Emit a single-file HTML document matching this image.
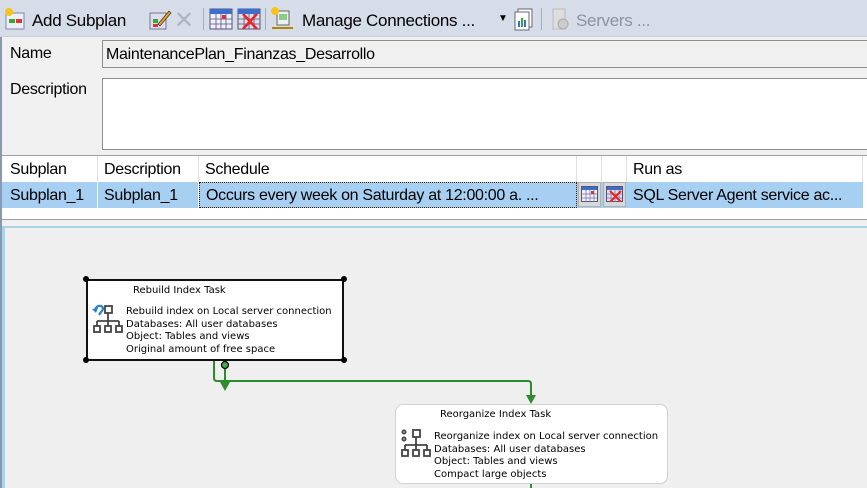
<!DOCTYPE html>
<html><head><style>
*{margin:0;padding:0;box-sizing:border-box}
body{width:867px;height:488px;overflow:hidden;background:#f0f0f0;font-family:"Liberation Sans",sans-serif;position:relative;color:#000}
.a{position:absolute;white-space:nowrap}
.tb{font-size:17px;letter-spacing:-0.3px}
.g{font-size:16px;letter-spacing:-0.3px}
.cell{position:absolute;border-right:1px solid #e0e0e0;height:26px;padding:5px 0 0 6px;font-size:16px;letter-spacing:-0.3px;white-space:nowrap;overflow:hidden}
.box{position:absolute;background:#fff;font-family:"DejaVu Sans",sans-serif;font-size:10px;line-height:12.5px;color:#111}
</style></head><body>
<div class="a" style="left:0;top:0;width:867px;height:37px;background:#d7dce9;border-bottom:1px solid #c8cfdf"></div>
<div class="a" style="left:0;top:37px;width:2px;height:451px;background:#8a97b5"></div>
<svg class="a" style="left:3px;top:7px" width="24" height="24"><rect x="3" y="6" width="18" height="16" fill="#eef" stroke="#7a8aa8"/><rect x="6" y="12" width="6" height="4" fill="#3a3"/><rect x="13" y="12" width="6" height="4" fill="#d33"/><circle cx="6" cy="5" r="4" fill="#f5c518"/></svg>
<div class="a tb" style="left:32px;top:11px">Add Subplan</div>
<svg class="a" style="left:148px;top:8px" width="24" height="24"><rect x="2" y="5" width="16" height="16" fill="#dde" stroke="#778"/><rect x="5" y="11" width="5" height="4" fill="#3a3"/><rect x="5" y="16" width="5" height="3" fill="#d33"/><path d="M10 16 L21 3 L23 5 L12 18Z" fill="#e8a020" stroke="#333" stroke-width=".7"/></svg>
<div class="a" style="left:174px;top:6px;font-size:24px;color:#b0b4bd">✕</div>
<div class="a" style="left:203px;top:8px;width:1px;height:22px;background:#aab"></div>
<svg class="a" style="left:209px;top:8px" width="24" height="22"><rect x="1" y="1" width="22" height="20" fill="#eef" stroke="#557"/><rect x="1" y="1" width="22" height="5" fill="#3a6fd0"/><path d="M1 11H23M1 16H23M7 6V21M12 6V21M17 6V21" stroke="#557" stroke-width=".8"/><rect x="13" y="7" width="4" height="4" fill="#d33"/></svg>
<svg class="a" style="left:237px;top:8px" width="24" height="22"><rect x="1" y="1" width="22" height="20" fill="#dde" stroke="#557"/><rect x="1" y="1" width="22" height="5" fill="#3a6fd0"/><path d="M1 11H23M1 16H23M7 6V21M12 6V21M17 6V21" stroke="#557" stroke-width=".8"/><path d="M6 6L20 21M20 6L6 21" stroke="#e22" stroke-width="2.5"/></svg>
<div class="a" style="left:265px;top:8px;width:1px;height:22px;background:#aab"></div>
<svg class="a" style="left:269px;top:6px" width="26" height="26"><rect x="8" y="5" width="12" height="14" fill="#eee" stroke="#666"/><rect x="10" y="8" width="8" height="6" fill="#8c8"/><path d="M3 22H24" stroke="#a80" stroke-width="2"/><circle cx="6" cy="5" r="4" fill="#f5c518"/></svg>
<div class="a tb" style="left:302px;top:11px">Manage Connections ...</div>
<div class="a" style="left:498px;top:13px;font-size:10px">▼</div>
<svg class="a" style="left:512px;top:7px" width="24" height="24"><rect x="6" y="2" width="14" height="18" fill="#fff" stroke="#667"/><rect x="3" y="5" width="14" height="18" fill="#fff" stroke="#667"/><rect x="6" y="14" width="2" height="6" fill="#3a6fd0"/><rect x="9" y="11" width="2" height="9" fill="#3a3"/><rect x="12" y="13" width="2" height="7" fill="#3a6fd0"/></svg>
<div class="a" style="left:541px;top:8px;width:1px;height:22px;background:#aab"></div>
<svg class="a" style="left:548px;top:7px" width="24" height="24"><rect x="5" y="2" width="12" height="20" fill="#ddd" stroke="#bbb"/><circle cx="15" cy="17" r="5" fill="#ccc" stroke="#aaa"/></svg>
<div class="a tb" style="left:576px;top:11px;color:#8e939c">Servers ...</div>
<div class="a g" style="left:10px;top:45px">Name</div>
<div class="a" style="left:102px;top:40px;width:765px;height:28px;background:#f0f0f0;border:1px solid #8e8e8e;border-right:none"></div>
<div class="a g" style="left:106px;top:46px">MaintenancePlan_Finanzas_Desarrollo</div>
<div class="a g" style="left:10px;top:81px">Description</div>
<div class="a" style="left:102px;top:78px;width:765px;height:72px;background:#fff;border:1px solid #8e8e8e;border-right:none"></div>
<div class="a" style="left:2px;top:155px;width:865px;height:65px;background:#fff;border-top:1px solid #a0a0a0;border-bottom:1px solid #a0a0a0"></div>
<div class="cell" style="left:2px;top:156px;width:96px;padding-left:8px">Subplan</div>
<div class="cell" style="left:98px;top:156px;width:101px">Description</div>
<div class="cell" style="left:199px;top:156px;width:378px">Schedule</div>
<div class="cell" style="left:577px;top:156px;width:25px"></div>
<div class="cell" style="left:602px;top:156px;width:25px"></div>
<div class="cell" style="left:627px;top:156px;width:236px">Run as</div>
<div class="a" style="left:2px;top:182px;width:861px;height:26px;background:#a6cff2"></div>
<div class="cell" style="left:2px;top:182px;width:96px;padding-left:8px;border-color:#fff">Subplan_1</div>
<div class="cell" style="left:98px;top:182px;width:101px;border-color:#fff">Subplan_1</div>
<div class="cell" style="left:199px;top:182px;width:378px;border:1px dotted #222;padding-top:4px">Occurs every week on Saturday at 12:00:00 a. ...</div>
<div class="a" style="left:578px;top:182px;width:23px;height:25px;background:#d8d8d8;border:1px solid #b0b0b0"></div>
<svg class="a" style="left:581px;top:186px" width="17" height="16"><rect x=".5" y=".5" width="16" height="15" fill="#eef" stroke="#557"/><rect x="1" y="1" width="15" height="3" fill="#3a6fd0"/><path d="M1 8H16M1 12H16M5 4V16M9 4V16M13 4V16" stroke="#779" stroke-width=".7"/><rect x="10" y="5" width="3" height="3" fill="#d33"/></svg>
<div class="a" style="left:603px;top:182px;width:23px;height:25px;background:#d8d8d8;border:1px solid #b0b0b0"></div>
<svg class="a" style="left:606px;top:186px" width="17" height="16"><rect x=".5" y=".5" width="16" height="15" fill="#dde" stroke="#557"/><rect x="1" y="1" width="15" height="3" fill="#3a6fd0"/><path d="M1 8H16M1 12H16M5 4V16M9 4V16M13 4V16" stroke="#779" stroke-width=".7"/><path d="M4 5L15 16M15 5L4 16" stroke="#e22" stroke-width="2"/></svg>
<div class="cell" style="left:627px;top:182px;width:236px;border:none">SQL Server Agent service ac...</div>
<div class="a" style="left:2px;top:226px;width:865px;height:262px;background:#efefef;border-top:2px solid #a8d4e4;border-left:3px solid #a8d4e4"></div>
<svg class="a" style="left:0;top:0" width="867" height="488">
<g stroke="#2e8b2e" stroke-width="2" fill="none">
<path d="M214 360V378Q214 381 217 381H528Q531 381 531 384V396"/>
<path d="M225 364V382"/>
</g>
<path d="M220 382L225 391L230 382Z" fill="#2e8b2e"/>
<path d="M526 395L531 404L536 395Z" fill="#2e8b2e"/>
<path d="M531 483V488" stroke="#2e8b2e" stroke-width="2"/>
</svg>
<div class="box" style="left:86px;top:279px;width:258px;height:82px;border:2px solid #111;border-radius:2px"></div>
<svg class="a" style="left:80px;top:273px" width="270" height="100">
<circle cx="6" cy="6" r="3" fill="#000"/><circle cx="264" cy="6" r="3" fill="#000"/><circle cx="6" cy="87" r="3" fill="#000"/><circle cx="264" cy="87" r="3" fill="#000"/>
<circle cx="145" cy="92" r="3.5" fill="#4a4" stroke="#000" stroke-width="1.2"/>
</svg>
<div class="a" style="left:133px;top:285px;font-family:'DejaVu Sans',sans-serif;font-size:10px">Rebuild Index Task</div>
<svg class="a" style="left:92px;top:304px" width="32" height="32"><path d="M3 7Q4 1 9 2Q13 4 9 8L7 11" stroke="#2a7fd0" stroke-width="2.2" fill="none"/><path d="M0 5L4 9L6 4Z" fill="#2a7fd0"/><g stroke="#444" stroke-width="1.8" fill="none"><rect x="13" y="2" width="7" height="7"/><path d="M16 9V17M5 17H27M5 17V22M16 17V22M27 17V22"/><rect x="2" y="22" width="6" height="6"/><rect x="13" y="22" width="6" height="6"/><rect x="24" y="22" width="6" height="6"/></g></svg>
<div class="a" style="left:126px;top:306px;font-family:'DejaVu Sans',sans-serif;font-size:10px;line-height:12.6px">Rebuild index on Local server connection<br>Databases: All user databases<br>Object: Tables and views<br>Original amount of free space</div>
<div class="box" style="left:395px;top:404px;width:273px;height:80px;border:1px solid #d0d0d0;border-radius:8px"></div>
<div class="a" style="left:440px;top:409px;font-family:'DejaVu Sans',sans-serif;font-size:10px">Reorganize Index Task</div>
<svg class="a" style="left:400px;top:428px" width="32" height="32"><g stroke="#444" stroke-width="1.8" fill="none"><circle cx="4" cy="4" r="1.6"/><circle cx="4" cy="11" r="1.6"/><rect x="13" y="2" width="7" height="7"/><path d="M16 9V17M5 17H27M5 17V22M16 17V22M27 17V22"/><rect x="2" y="22" width="6" height="6"/><rect x="13" y="22" width="6" height="6"/><rect x="24" y="22" width="6" height="6"/></g></svg>
<div class="a" style="left:434px;top:431px;font-family:'DejaVu Sans',sans-serif;font-size:10px;line-height:12.6px">Reorganize index on Local server connection<br>Databases: All user databases<br>Object: Tables and views<br>Compact large objects</div>
</body></html>
